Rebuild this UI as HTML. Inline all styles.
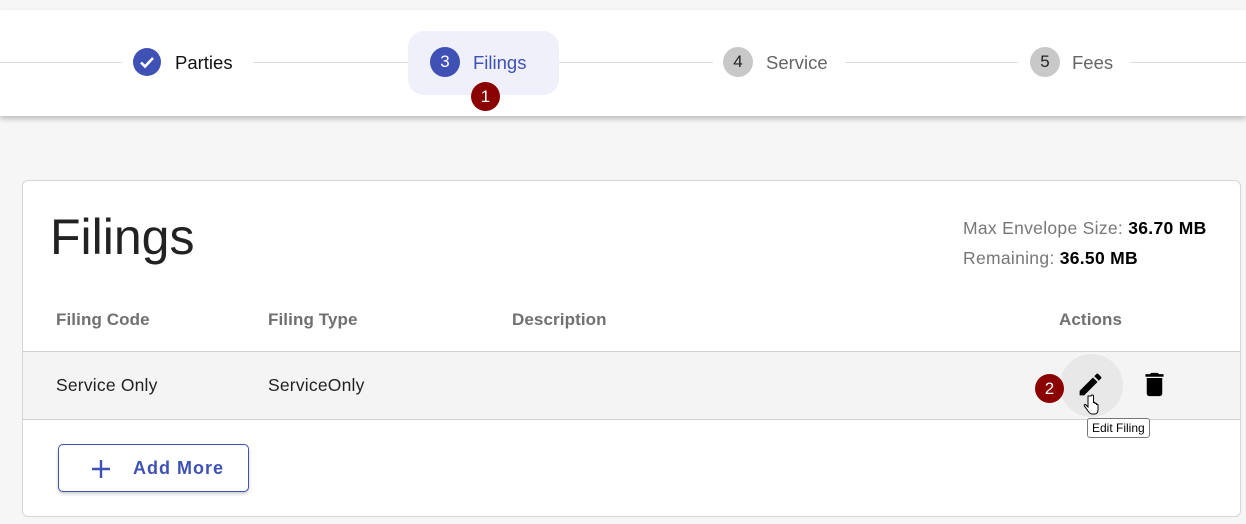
<!DOCTYPE html>
<html><head><meta charset="utf-8"><style>
*{box-sizing:border-box;margin:0;padding:0}
body{width:1246px;height:524px;background:#f6f6f6;font-family:"Liberation Sans",sans-serif;position:relative;overflow:hidden}
.hdr{position:absolute;left:0;top:10px;width:1246px;height:106px;background:#fff;box-shadow:0 3px 5px rgba(0,0,0,.22)}
.line{position:absolute;top:52px;height:1px;background:#ddd}
.circ{position:absolute;top:38px;width:30px;height:30px;border-radius:50%;color:#fff;font-size:17px;text-align:center;line-height:30px}
.lbl{position:absolute;top:42px;font-size:18.5px}
.badge{position:absolute;width:29px;height:29px;border-radius:50%;background:#8b0000;color:#fff;font-size:17px;text-align:center;line-height:29px}
.card{position:absolute;left:22px;top:180px;width:1219px;height:337px;background:#fff;border:1px solid #d6d6d6;border-radius:6px}
.th{position:absolute;top:310px;font-size:17px;font-weight:bold;color:#707070;letter-spacing:.1px}
.row{position:absolute;left:23px;top:351px;width:1217px;height:69px;background:#f4f4f4;border-top:1px solid #d0d0d0;border-bottom:1px solid #d0d0d0}
.td{position:absolute;top:375px;font-size:17.5px;color:#222;letter-spacing:.2px}
.env{position:absolute;left:963px;font-size:17.5px;color:#777;letter-spacing:.3px}
</style></head><body>
<div class="hdr">
 <div class="line" style="left:0;width:122px"></div>
 <div class="line" style="left:253px;width:155px"></div>
 <div class="line" style="left:558px;width:155px"></div>
 <div class="line" style="left:845px;width:173px"></div>
 <div class="line" style="left:1130px;width:116px"></div>
 <div style="position:absolute;left:408px;top:21px;width:151px;height:64px;border-radius:16px;background:#eff0fa"></div>
 <div class="circ" style="left:133px;top:38px;width:28px;height:28px;background:#3f51b5"><svg width="28" height="28" viewBox="0 0 28 28"><path d="M8 14.5l4 4 8-8.5" stroke="#fff" stroke-width="2.6" fill="none"/></svg></div>
 <div class="lbl" style="left:175px;color:#111">Parties</div>
 <div class="circ" style="left:430px;top:37px;background:#3f51b5">3</div>
 <div class="lbl" style="left:473px;color:#3f51b5">Filings</div>
 <div class="circ" style="left:723px;top:37px;background:#c8c8c8;color:#222">4</div>
 <div class="lbl" style="left:766px;color:#666">Service</div>
 <div class="circ" style="left:1030px;top:37px;background:#c8c8c8;color:#222">5</div>
 <div class="lbl" style="left:1072px;color:#666">Fees</div>
</div>
<div class="badge" style="left:471px;top:82px">1</div>
<div class="card"></div>
<div style="position:absolute;left:50px;top:208px;font-size:50px;color:#222">Filings</div>
<div class="env" style="top:218px">Max Envelope Size: <b style="color:#000">36.70 MB</b></div>
<div class="env" style="top:248px">Remaining: <b style="color:#000">36.50 MB</b></div>
<div class="th" style="left:56px">Filing Code</div>
<div class="th" style="left:268px">Filing Type</div>
<div class="th" style="left:512px">Description</div>
<div class="th" style="left:1059px">Actions</div>
<div class="row"></div>
<div class="td" style="left:56px">Service Only</div>
<div class="td" style="left:268px">ServiceOnly</div>
<div style="position:absolute;left:1060px;top:354px;width:63px;height:63px;border-radius:50%;background:#e8e8e8"></div>
<svg style="position:absolute;left:1076px;top:370px" width="29" height="29" viewBox="0 0 24 24"><path d="M3 17.25V21h3.75L17.81 9.94l-3.75-3.75L3 17.25zM20.71 7.04a1 1 0 000-1.41l-2.34-2.34a1 1 0 00-1.41 0l-1.83 1.83 3.75 3.75 1.83-1.83z" fill="#000"/></svg>
<svg style="position:absolute;left:1139px;top:369px" width="31" height="31" viewBox="0 0 24 24"><path d="M6 19c0 1.1.9 2 2 2h8c1.1 0 2-.9 2-2V7H6v12zM19 4h-3.5l-1-1h-5l-1 1H5v2h14V4z" fill="#000"/></svg>
<svg style="position:absolute;left:1083px;top:394px" width="18" height="24" viewBox="0 0 18 24"><path d="M5 2v11l-2-2c-1-1-2.5 0-1.5 1.2L5 17c1 1.5 2 3 4 3h3c2 0 3-2 3-4v-5c0-1-1.5-1-1.5 0v-1c0-1-1.5-1-1.5 0v-1c0-1-1.5-1-1.5 0V2c0-1.3-2.5-1.3-2.5 0z" fill="#fff" stroke="#000" stroke-width="1"/></svg>
<div class="badge" style="left:1035px;top:374px">2</div>
<div style="position:absolute;left:1087px;top:418px;padding:2px 4px;font-size:12px;background:#fff;border:1px solid #777;border-radius:3px;color:#000">Edit Filing</div>
<div style="position:absolute;left:58px;top:444px;width:191px;height:48px;border:1px solid #3f51b5;border-radius:5px;background:#fff;box-shadow:0 2px 3px rgba(0,0,0,.2);color:#3f51b5;font-size:18px;font-weight:bold;letter-spacing:1px">
 <svg style="position:absolute;left:31px;top:13px" width="22" height="22" viewBox="0 0 22 22"><path d="M11 2v18M2 11h18" stroke="#3f51b5" stroke-width="2.4"/></svg>
 <span style="position:absolute;left:74px;top:13px">Add More</span>
</div>
</body></html>
